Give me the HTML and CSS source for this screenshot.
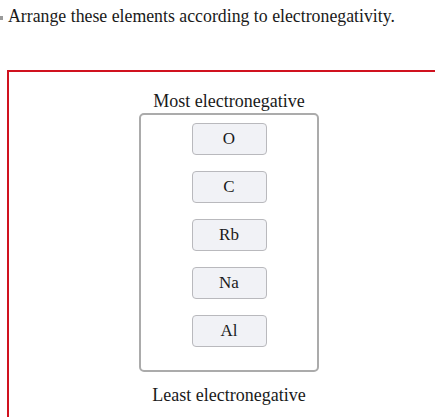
FILE: index.html
```html
<!DOCTYPE html>
<html lang="en">

<head>
    <meta charset="UTF-8">
    <meta name="viewport" content="width=device-width, initial-scale=1.0">
    <title>Electronegativity ranking</title>
    <link rel="stylesheet" href="styles.css">
</head>

<body>
    <header class="question">
        <span class="question-mark"></span>
        <p class="question-text">Arrange these elements according to electronegativity.</p>
    </header>
    <main class="answer-frame">
        <section class="ranking">
            <h3 class="ranking-label">Most electronegative</h3>
            <ul class="ranking-list">
                <li><button class="element-chip">O</button></li>
                <li><button class="element-chip">C</button></li>
                <li><button class="element-chip">Rb</button></li>
                <li><button class="element-chip">Na</button></li>
                <li><button class="element-chip">Al</button></li>
            </ul>
            <h3 class="ranking-label">Least electronegative</h3>
        </section>
    </main>
</body>

</html>
```

FILE: styles.css
```css
html,
body {
    margin: 0;
    overflow: hidden;
}

body {
    background-color: white;
    color: #1a1a1a;
    font-family: "Liberation Serif", "Times New Roman", serif;
    font-size: 17.8px;
}

.question {
    position: relative;
    padding: 6px 0 0 8px;
}

/* clipped edge of the question number */
.question-mark {
    position: absolute;
    left: 0;
    top: 16px;
    width: 3px;
    height: 4px;
    background-color: #9a9a9a;
}

.question-text {
    margin: 0;
    line-height: 20px;
}

.answer-frame {
    margin: 44px 0 0 7px;
    width: 440px;
    border-top: 2px solid #d0121f;
    border-left: 2px solid #d0121f;
    height: 400px;
}

.ranking {
    display: flex;
    flex-direction: column;
    align-items: center;
    padding-top: 18px;
}

.ranking-label {
    margin: 0;
    font-size: 18px;
    font-weight: normal;
    line-height: 22px;
}

.ranking-list {
    list-style: none;
    margin: 1px 0 12px;
    padding: 8px 0 7px;
    width: 176px;
    border: 2px solid #ababab;
    border-radius: 5px;
    display: flex;
    flex-direction: column;
    align-items: center;
}

.ranking-list li {
    margin-bottom: 16px;
}

.element-chip {
    width: 75px;
    height: 32px;
    border: 1px solid #b9b9bd;
    border-radius: 4px;
    background-color: #f1f2f6;
    color: #1a1a1a;
    font-family: "Liberation Serif", "Times New Roman", serif;
    font-size: 17px;
    padding: 0;
}
```
